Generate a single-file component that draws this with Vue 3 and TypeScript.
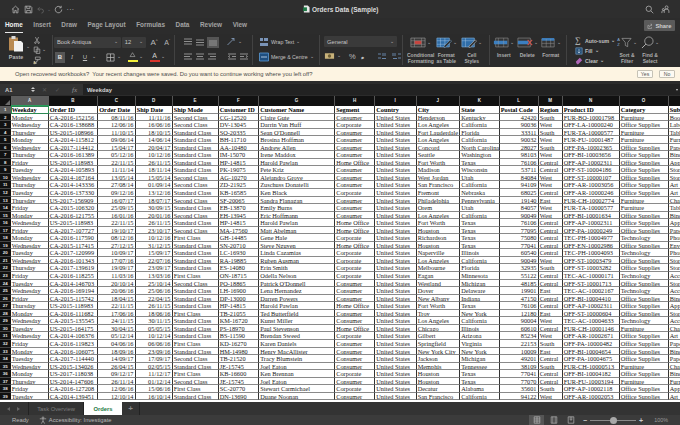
<script setup lang="ts">
const raw = `Monday|CA-2016-152156|08/11/16|11/11/16|Second Class|CG-12520|Claire Gute|Consumer|United States|Henderson|Kentucky|42420|South|FUR-BO-10001798|Furniture|Bookcases
Wednesday|CA-2016-138688|12/06/16|16/06/16|Second Class|DV-13045|Darrin Van Huff|Corporate|United States|Los Angeles|California|90036|West|OFF-LA-10000240|Office Supplies|Labels
Thursday|US-2015-108966|11/10/15|18/10/15|Standard Class|SO-20335|Sean O'Donnell|Consumer|United States|Fort Lauderdale|Florida|33311|South|FUR-TA-10000577|Furniture|Tables
Monday|CA-2014-115812|09/06/14|14/06/14|Standard Class|BH-11710|Brosina Hoffman|Consumer|United States|Los Angeles|California|90032|West|FUR-FU-10001487|Furniture|Furnishings
Wednesday|CA-2017-114412|15/04/17|20/04/17|Standard Class|AA-10480|Andrew Allen|Consumer|United States|Concord|North Carolina|28027|South|OFF-PA-10002365|Office Supplies|Paper
Thursday|CA-2016-161389|05/12/16|10/12/16|Standard Class|IM-15070|Irene Maddox|Consumer|United States|Seattle|Washington|98103|West|OFF-BI-10003656|Office Supplies|Binders
Friday|US-2015-118983|22/11/15|26/11/15|Standard Class|HP-14815|Harold Pawlan|Home Office|United States|Fort Worth|Texas|76106|Central|OFF-AP-10002311|Office Supplies|Appliances
Tuesday|CA-2014-105893|11/11/14|18/11/14|Standard Class|PK-19075|Pete Kriz|Consumer|United States|Madison|Wisconsin|53711|Central|OFF-ST-10004186|Office Supplies|Storage
Wednesday|CA-2014-167164|13/05/14|15/05/14|Second Class|AG-10270|Alejandro Grove|Consumer|United States|West Jordan|Utah|84084|West|OFF-ST-10000107|Office Supplies|Storage
Thursday|CA-2014-143336|27/08/14|01/09/14|Second Class|ZD-21925|Zuschuss Donatelli|Consumer|United States|San Francisco|California|94109|West|OFF-AR-10003056|Office Supplies|Art
Tuesday|CA-2016-137330|09/12/16|13/12/16|Standard Class|KB-16585|Ken Black|Corporate|United States|Fremont|Nebraska|68025|Central|OFF-AR-10000246|Office Supplies|Art
Thursday|US-2017-156909|16/07/17|18/07/17|Second Class|SF-20065|Sandra Flanagan|Consumer|United States|Philadelphia|Pennsylvania|19140|East|FUR-CH-10002774|Furniture|Chairs
Friday|CA-2015-106320|25/09/15|30/09/15|Standard Class|EB-13870|Emily Burns|Consumer|United States|Orem|Utah|84057|West|FUR-TA-10000577|Furniture|Tables
Monday|CA-2016-121755|16/01/16|20/01/16|Second Class|EH-13945|Eric Hoffmann|Consumer|United States|Los Angeles|California|90049|West|OFF-BI-10001634|Office Supplies|Binders
Wednesday|US-2015-118983|22/11/15|26/11/15|Standard Class|HP-14815|Harold Pawlan|Home Office|United States|Fort Worth|Texas|76106|Central|OFF-AP-10002311|Office Supplies|Appliances
Friday|CA-2017-107727|19/10/17|23/10/17|Second Class|MA-17560|Matt Abelman|Home Office|United States|Houston|Texas|77095|Central|OFF-PA-10000249|Office Supplies|Paper
Monday|CA-2016-117590|08/12/16|10/12/16|First Class|GH-14485|Gene Hale|Corporate|United States|Richardson|Texas|75080|Central|TEC-PH-10004977|Technology|Phones
Wednesday|CA-2015-117415|27/12/15|31/12/15|Standard Class|SN-20710|Steve Nguyen|Home Office|United States|Houston|Texas|77041|Central|OFF-EN-10002986|Office Supplies|Envelopes
Tuesday|CA-2017-120999|10/09/17|15/09/17|Standard Class|LC-16930|Linda Cazamias|Corporate|United States|Naperville|Illinois|60540|Central|TEC-PH-10004093|Technology|Phones
Wednesday|CA-2016-101343|17/07/16|22/07/16|Standard Class|RA-19885|Ruben Ausman|Corporate|United States|Los Angeles|California|90049|West|OFF-ST-10003479|Office Supplies|Storage
Thursday|CA-2017-139619|19/09/17|23/09/17|Standard Class|ES-14080|Erin Smith|Corporate|United States|Melbourne|Florida|32935|South|OFF-ST-10003282|Office Supplies|Storage
Friday|CA-2016-118255|11/03/16|13/03/16|First Class|ON-18715|Odella Nelson|Corporate|United States|Eagan|Minnesota|55122|Central|TEC-AC-10000171|Technology|Accessories
Tuesday|CA-2014-146703|20/10/14|25/10/14|Second Class|PO-18865|Patrick O'Donnell|Consumer|United States|Westland|Michigan|48185|Central|OFF-ST-10001713|Office Supplies|Storage
Wednesday|CA-2016-169194|20/06/16|25/06/16|Standard Class|LH-16900|Lena Hernandez|Consumer|United States|Dover|Delaware|19901|East|TEC-AC-10002167|Technology|Accessories
Friday|CA-2015-115742|18/04/15|22/04/15|Standard Class|DP-13000|Darren Powers|Consumer|United States|New Albany|Indiana|47150|Central|OFF-BI-10004410|Office Supplies|Binders
Thursday|US-2015-118983|22/11/15|26/11/15|Standard Class|HP-14815|Harold Pawlan|Home Office|United States|Fort Worth|Texas|76106|Central|OFF-AP-10002311|Office Supplies|Appliances
Monday|CA-2016-111682|17/06/16|18/06/16|First Class|TB-21055|Ted Butterfield|Consumer|United States|Troy|New York|12180|East|OFF-ST-10000604|Office Supplies|Storage
Wednesday|CA-2015-135545|24/11/15|30/11/15|Standard Class|KM-16720|Kunst Miller|Consumer|United States|Los Angeles|California|90004|West|TEC-AC-10004633|Technology|Accessories
Tuesday|US-2015-164175|30/04/15|05/05/15|Standard Class|PS-18970|Paul Stevenson|Home Office|United States|Chicago|Illinois|60610|Central|FUR-CH-10001146|Furniture|Chairs
Wednesday|CA-2014-106376|05/12/14|10/12/14|Standard Class|BS-11590|Brendan Sweed|Corporate|United States|Gilbert|Arizona|85234|West|OFF-AR-10002671|Office Supplies|Art
Friday|CA-2016-119823|04/06/16|06/06/16|First Class|KD-16270|Karen Daniels|Consumer|United States|Springfield|Virginia|22153|South|OFF-PA-10000482|Office Supplies|Paper
Monday|CA-2016-106075|18/09/16|23/09/16|Standard Class|HM-14980|Henry MacAllister|Consumer|United States|New York City|New York|10009|East|OFF-BI-10004654|Office Supplies|Binders
Tuesday|CA-2017-114440|14/09/17|17/09/17|Second Class|TB-21520|Tracy Blumstein|Consumer|United States|Jackson|Michigan|49201|Central|OFF-PA-10004675|Office Supplies|Paper
Wednesday|US-2015-134026|26/04/15|02/05/15|Standard Class|JE-15745|Joel Eaton|Consumer|United States|Memphis|Tennessee|38109|South|FUR-CH-10000513|Furniture|Chairs
Monday|US-2017-118038|09/12/17|11/12/17|First Class|KB-16600|Ken Brennan|Corporate|United States|Houston|Texas|77041|Central|OFF-BI-10004182|Office Supplies|Binders
Thursday|US-2014-147606|26/11/14|01/12/14|Second Class|JE-15745|Joel Eaton|Consumer|United States|Houston|Texas|77070|Central|FUR-FU-10003194|Furniture|Furnishings
Friday|CA-2016-127208|12/06/16|15/06/16|First Class|SC-20770|Stewart Carmichael|Corporate|United States|Decatur|Alabama|35601|South|OFF-AP-10002118|Office Supplies|Appliances
Tuesday|CA-2014-139451|12/10/14|16/10/14|Standard Class|DN-13690|Duane Noonan|Consumer|United States|San Francisco|California|94122|West|OFF-AR-10002053|Office Supplies|Art`
const columns = 'ABCDEFGHIJKLMNOP'.split('')
const headers = ['Weekday', 'Order ID', 'Order Date', 'Ship Date', 'Ship Mode', 'Customer ID', 'Customer Name', 'Segment', 'Country', 'City', 'State', 'Postal Code', 'Region', 'Product ID', 'Category', 'Sub-Category']
const rows: string[][] = raw.split('\n').map((line) => line.split('|'))
const rightAligned = new Set([2, 3, 11])
const tabs = ['Home', 'Insert', 'Draw', 'Page Layout', 'Formulas', 'Data', 'Review', 'View']
</script>

<template>
  <div class="app">
    <header class="titlebar">
      <div class="quick">
        <svg class="qi" viewBox="0 0 10 10"><path d="M1 5 5 1.3 9 5M2.3 4v4.7h1.9V6h1.6v2.7h1.9V4" /></svg>
        <svg class="qi" viewBox="0 0 10 10"><path d="M1.3 1.3h6l1.4 1.4v6H1.3zM3 1.3v2.4h3.6V1.3M3 8.7V6h4v2.7" /></svg>
        <svg class="qi dim" viewBox="0 0 10 10"><path d="M2 4.5 4 2.5M2 4.5l2 2M2 4.5h4a2 2 0 0 1 0 4.5" /></svg>
        <span class="dim-caret">⌄</span>
        <svg class="qi" viewBox="0 0 10 10"><path d="M7.6 2.6A3.6 3.6 0 1 0 8.6 5M8 .9v2.2H5.8" /></svg>
        <span class="more">···</span>
      </div>
      <div class="doc">
        <svg class="doc-icon" viewBox="0 0 8 9"><path d="M1 .5h4.4L7.5 2.6v6H1z" fill="#e8e8e8" /><path d="M.2 2.6h4.3v4.3H.2z" fill="#1d7a45" /></svg>
        <span>Orders Data (Sample)</span>
      </div>
      <div class="title-right">
        <svg class="qi" viewBox="0 0 10 10"><circle cx="4.2" cy="4.2" r="3" /><path d="m6.5 6.5 2.7 2.7" /></svg>
        <svg class="qi" viewBox="0 0 10 10"><circle cx="6.2" cy="2.6" r="1.6" /><path d="M3.6 8.8V6.6a2.6 2 0 0 1 5.2 0v2.2" /><circle cx="2.6" cy="5" r="1.1" /><path d="M1 9V7.4a1.6 1.4 0 0 1 2-1" /></svg>
      </div>
    </header>

    <nav class="tabs">
      <span v-for="(t, i) in tabs" :key="t" class="tab" :class="{ active: i === 0 }">{{ t }}</span>
      <span class="share">
        <svg class="share-icon" viewBox="0 0 10 10"><path d="M3.5 4H1.5v5h6V7M4 7c0-2.5 1.5-4 4-4M6.3 1 8.4 3 6.3 5" /></svg>
        Share
      </span>
    </nav>

    <section class="ribbon">
      <div class="group clip">
        <div class="paste">
          <svg class="paste-icon" viewBox="0 0 17 17">
            <path d="M1 2.5h9v13H1z" fill="#b98a52" />
            <path d="M3.5 1h4v3h-4z" fill="#d9d9d9" />
            <path d="M6 6h7l2 2v8.5H6z" fill="#f2f2f2" />
          </svg>
          <span class="paste-label">Paste</span>
        </div>
        <span class="caret paste-caret">⌄</span>
        <div class="clip-tools">
          <svg class="qi" viewBox="0 0 10 10"><path d="M3 1l3 6M7 1 4 7" /><circle cx="3" cy="8" r="1" /><circle cx="7" cy="8" r="1" /></svg>
          <span class="copy"><svg class="qi" viewBox="0 0 10 10"><path d="M1.5 1h4.5v6H1.5zM4 3.5h4.5V9H4z" /></svg><span class="caret">⌄</span></span>
          <svg class="qi brush" viewBox="0 0 10 10"><path d="M3 1h6v3H3zM6 4v2H4v3" /><path d="M1.5 6 4 9 1 9.5z" fill="#e2c25c" /></svg>
        </div>
      </div>

      <div class="group font">
        <div class="row">
          <span class="select font-name"><span>Book Antiqua</span><span class="caret">⌄</span></span>
          <span class="select font-size"><span>12</span><span class="caret">⌄</span></span>
          <span class="glyph grow">A<sup>^</sup></span>
          <span class="glyph shrink">A<sup>ˇ</sup></span>
        </div>
        <div class="row lower">
          <span class="btn on bold">B</span>
          <span class="btn ital">I</span>
          <span class="btn under">U</span>
          <span class="caret">⌄</span>
          <svg class="qi border-icon" viewBox="0 0 10 10"><path d="M1 1h8v8H1zM5 1v8M1 5h8" /></svg>
          <span class="caret">⌄</span>
          <span class="color-btn fill-icon"><svg class="qi" viewBox="0 0 10 10"><path d="M5 1 1.5 6.5h7z" /></svg><i class="swatch yellow"></i></span>
          <span class="caret">⌄</span>
          <span class="color-btn"><span class="color-a">A</span><i class="swatch red"></i></span>
          <span class="caret">⌄</span>
        </div>
      </div>

      <div class="group align">
        <div class="row">
          <svg class="line" viewBox="0 0 10 10"><path d="M1 2h8M1 4.5h8M1 7h8" /></svg>
          <svg class="line" viewBox="0 0 10 10"><path d="M1 3h8M1 5.5h8M1 8h8" /></svg>
          <span class="line-on"><svg class="line" viewBox="0 0 10 10"><path d="M1 4h8M1 6h8M1 8h8" /></svg></span>
          <svg class="line orient" viewBox="0 0 10 10"><path d="M1.5 8 8 1.5M5.5 1.5H8V4" /></svg>
          <span class="caret">⌄</span>
        </div>
        <div class="row lower">
          <svg class="line" viewBox="0 0 10 10"><path d="M1 2h8M1 4.5h6M1 7h8" /></svg>
          <svg class="line" viewBox="0 0 10 10"><path d="M1 2h8M2 4.5h6M1 7h8" /></svg>
          <svg class="line" viewBox="0 0 10 10"><path d="M1 2h8M3 4.5h6M1 7h8" /></svg>
          <svg class="line indent" viewBox="0 0 10 10"><path d="M1 2h8M5 4.5h4M1 7h8M3 3.5 1.5 4.5 3 5.5" /></svg>
          <svg class="line" viewBox="0 0 10 10"><path d="M1 2h8M1 4.5h4M1 7h8M7 3.5l1.5 1-1.5 1" /></svg>
        </div>
      </div>

      <div class="group wrap">
        <div class="row small-row"><svg class="wi" viewBox="0 0 10 10"><path d="M1 1h3v3H1zM5 1h4v3H5zM1 6h8v3H1z" fill="#7a94b8" /></svg><span>Wrap Text</span><span class="caret">⌄</span></div>
        <div class="row small-row lower"><svg class="wi" viewBox="0 0 10 10"><path d="M.5 1h9v8h-9z" fill="#1f4f80" stroke="#5b9bd5" stroke-width=".8" /><path d="M2 5h6" stroke="#cfe2f5" stroke-width=".8" /></svg><span>Merge &amp; Centre</span><span class="caret">⌄</span></div>
      </div>

      <div class="group number">
        <span class="select general"><span>General</span><span class="caret">⌄</span></span>
        <div class="row lower numrow">
          <svg class="wi money" viewBox="0 0 12 10"><path d="M1 2h10v6H1z" fill="#c8b27a" /><circle cx="6" cy="5" r="1.8" fill="#6d5d33" /></svg>
          <span class="caret">⌄</span>
          <span class="sym pct">%</span>
          <span class="sym comma">❟</span>
          <span class="vsep"></span>
          <svg class="wi dec" viewBox="0 0 10 10"><path d="M1 3h3M1 7h3M6 2v3M8 2v3M5 7.5h4" stroke="#6e8fb5" fill="none" stroke-width=".9" /></svg>
          <svg class="wi dec" viewBox="0 0 10 10"><path d="M6 3h3M6 7h3M1 2v3M3 2v3M1 7.5h4" stroke="#6e8fb5" fill="none" stroke-width=".9" /></svg>
        </div>
      </div>

      <div class="group styles">
        <div class="big">
          <span class="big-top"><svg class="bi" viewBox="0 0 18 12"><path d="M1 1h16v10H1z" fill="#3a3a3a" stroke="#9a9a9a" stroke-width=".7" /><path d="M5 4h8v4H5z" fill="#c8423c" /><path d="M5 1v10M13 1v10M1 4h16M1 8h16" stroke="#9a9a9a" stroke-width=".5" /></svg><span class="caret">⌄</span></span>
          <span class="big-label">Conditional<br />Formatting</span>
        </div>
        <div class="big">
          <span class="big-top"><svg class="bi" viewBox="0 0 18 12"><path d="M1 1h14v10H1z" fill="#2f6da8" stroke="#7fb0dc" stroke-width=".7" /><path d="M5 1v10M10 1v10M1 4h14M1 8h14" stroke="#a9c8e4" stroke-width=".5" /><path d="m9 10 7-7 1.5 1.5-7 7H9z" fill="#2b2b2b" stroke="#7fb0dc" stroke-width=".6" /></svg><span class="caret">⌄</span></span>
          <span class="big-label">Format<br />as Table</span>
        </div>
        <div class="big">
          <span class="big-top"><svg class="bi" viewBox="0 0 18 12"><path d="M1 1h14v10H1z" fill="#2f6da8" stroke="#7fb0dc" stroke-width=".7" /><path d="M5 1v10M1 4h14" stroke="#a9c8e4" stroke-width=".5" /><path d="m9 10 7-7 1.5 1.5-7 7H9z" fill="#2b2b2b" stroke="#c8c8c8" stroke-width=".6" /></svg><span class="caret">⌄</span></span>
          <span class="big-label">Cell<br />Styles</span>
        </div>
      </div>

      <div class="group cells">
        <div class="big cell-btn">
          <span class="big-top"><svg class="bi" viewBox="0 0 18 12"><path d="M3 1h14v10H3z" fill="#333" stroke="#9a9a9a" stroke-width=".6" /><path d="M1 4h15v4H1z" fill="#3c7fc0" /><path d="M6 1v10M12 1v10" stroke="#9a9a9a" stroke-width=".5" /></svg><span class="caret">⌄</span></span>
          <span class="big-label">Insert</span>
        </div>
        <div class="big cell-btn">
          <span class="big-top"><svg class="bi" viewBox="0 0 18 12"><path d="M1 1h14v10H1z" fill="#333" stroke="#9a9a9a" stroke-width=".6" /><path d="M1 4h12v4H1z" fill="#3c7fc0" /><path d="m12 3 5 6M17 3l-5 6" stroke="#d0554d" stroke-width="1.2" /></svg><span class="caret">⌄</span></span>
          <span class="big-label">Delete</span>
        </div>
        <div class="big cell-btn">
          <span class="big-top"><svg class="bi" viewBox="0 0 18 12"><path d="M2 2h14v9H2z" fill="#333" stroke="#9a9a9a" stroke-width=".6" /><path d="M2 1h14v3H2z" fill="#3c7fc0" /><path d="M7 2v9M12 2v9M2 7h14" stroke="#9a9a9a" stroke-width=".5" /></svg><span class="caret">⌄</span></span>
          <span class="big-label">Format</span>
        </div>
      </div>

      <div class="group edit">
        <div class="edit-list">
          <div class="edit-item"><span class="sigma">∑</span><span>Auto-sum</span><span class="caret">⌄</span></div>
          <div class="edit-item"><svg class="wi" viewBox="0 0 10 10"><path d="M1 1h8v8H1z" fill="#274f75" stroke="#7aa6cf" stroke-width=".7" /><path d="M5 2.5v5M3.5 6 5 7.5 6.5 6" stroke="#dce9f5" fill="none" stroke-width=".7" /></svg><span>Fill</span><span class="caret">⌄</span></div>
          <div class="edit-item"><svg class="wi" viewBox="0 0 10 10"><path d="M1 6 6 1l3 3-5 5H2.5z" fill="#b066b8" /></svg><span>Clear</span><span class="caret">⌄</span></div>
        </div>
        <div class="big sort">
          <span class="big-top"><span class="az">A<br />Z</span><svg class="bi funnel" viewBox="0 0 12 12"><path d="M1 1.5h10L7.3 6v4.500l-2.600-1.300V6z" fill="none" stroke="#a8a8a8" stroke-width=".7" /></svg><span class="caret">⌄</span></span>
          <span class="big-label">Sort &amp;<br />Filter</span>
        </div>
        <div class="big find">
          <span class="big-top"><svg class="bi lens" viewBox="0 0 14 14"><circle cx="8.5" cy="5.5" r="4.5" fill="none" stroke="#c8c8c8" stroke-width=".7" /><path d="M5.3 8.7 1 13" stroke="#c8c8c8" stroke-width=".9" /></svg><span class="caret">⌄</span></span>
          <span class="big-label">Find &amp;<br />Select</span>
        </div>
      </div>
    </section>

    <aside class="notice">
      <span class="notice-text">Open recovered workbooks?&nbsp;&nbsp;Your recent changes were saved. Do you want to continue working where you left off?</span>
      <span class="notice-actions">
        <button class="nb">Yes</button>
        <button class="nb">No</button>
      </span>
    </aside>

    <div class="formula">
      <span class="namebox">A1</span>
      <span class="stepper"><i class="up"></i><i class="down"></i></span>
      <span class="fx-btn muted">✕</span>
      <span class="fx-btn muted">✓</span>
      <span class="fx-btn fx">fx</span>
      <span class="input">Weekday<i class="down-arrow"></i></span>
    </div>

    <main class="sheet">
      <div class="corner"><i class="corner-tri"></i></div>
      <div v-for="(c, i) in columns" :key="c" class="colhead" :class="{ sel: i === 0 }">{{ c }}</div>

      <div class="rownum sel">1</div>
      <div v-for="(h, i) in headers" :key="h" class="cell head" :class="{ current: i === 0 }">{{ h }}</div>

      <template v-for="(r, ri) in rows" :key="ri">
        <div class="rownum">{{ ri + 2 }}</div>
        <div v-for="(v, ci) in r" :key="ci" class="cell" :class="{ right: rightAligned.has(ci) }">{{ v }}</div>
      </template>
    </main>

    <div class="sheetbar">
      <span class="arrows"><i class="al"></i><i class="ar"></i></span>
      <span class="sheet-tab">Task Overview</span>
      <span class="sheet-tab active">Orders</span>
      <span class="add">+</span>
    </div>

    <footer class="status">
      <span class="ready">Ready</span>
      <span class="access">
        <svg class="qi" viewBox="0 0 10 10"><circle cx="5" cy="2" r="1" /><path d="M1 3.5h8M5 3.5V6M3 9.5 5 6l2 3.5" /></svg>
        Accessibility: Investigate
      </span>
      <span class="status-right">
        <span class="view on"><svg class="qi" viewBox="0 0 10 10"><path d="M1.5 1h7v8h-7zM1.5 3.7h7M1.5 6.3h7M5 1v8" /></svg></span>
        <span class="view"><svg class="qi" viewBox="0 0 10 10"><path d="M1.5 1h7v8h-7zM3.5 1v8M6.5 1v8" /></svg></span>
        <span class="view"><svg class="qi" viewBox="0 0 10 10"><path d="M1.5 1h7v8h-7zM4 1v4h2V1" /></svg></span>
        <span class="zoom-sym">−</span>
        <span class="slider"><i class="knob"></i></span>
        <span class="zoom-sym">+</span>
        <span class="pct100">100%</span>
      </span>
    </footer>
  </div>
</template>

<style scoped>
.app {
  width: 680px;
  height: 425px;
  overflow: hidden;
  display: flex;
  flex-direction: column;
  background: #2b2b2b;
  color: #d0d0d0;
  font-family: "Liberation Sans", Arial, sans-serif;
  font-size: 5.6px;
}
svg { display: block; flex: none; }
.qi { width: 8px; height: 8px; fill: none; stroke: #bdbdbd; stroke-width: .8; }
.qi.dim { stroke: #6b6b6b; }
.caret { font-size: 5px; line-height: 5px; color: #b5b5b5; height: 6px; flex: none; }

.titlebar { height: 18px; flex: none; display: flex; align-items: center; position: relative; background: #2e2e2e; padding: 0 10px 0 11px; }
.quick { display: flex; align-items: center; gap: 3.5px; }
.quick .qi { width: 9px; height: 9px; }
.dim-caret { color: #666; font-size: 5px; margin-left: -2px; }
.more { color: #bbb; font-size: 7px; letter-spacing: .3px; }
.doc { position: absolute; left: 303px; display: flex; align-items: center; gap: 2px; font-size: 6.5px; font-weight: bold; color: #dcdcdc; }
.doc-icon { width: 7px; height: 8px; }
.title-right { margin-left: auto; display: flex; gap: 7px; }
.title-right .qi { width: 9px; height: 9px; }

.tabs { height: 16px; flex: none; display: flex; align-items: flex-start; background: #2c2c2c; padding: 0 5px; position: relative; }
.tab { font-size: 6.4px; color: #c0c0c0; margin-right: 10.6px; line-height: 13px; height: 13.5px; font-weight: bold; opacity: .8; }
.tab.active { color: #f0f0f0; border-bottom: 1px solid #e8e8e8; opacity: 1; }
.share { position: absolute; left: 644px; top: 2px; width: 31px; height: 11px; background: #5a5a5a; border-radius: 1px; display: flex; align-items: center; justify-content: center; gap: 2px; color: #cfcfcf; font-size: 5.8px; font-weight: bold; }
.share-icon { width: 6px; height: 6px; fill: none; stroke: #cfcfcf; stroke-width: .8; }

.ribbon { height: 33px; flex: none; display: flex; background: #2b2b2b; }
.group { flex: none; height: 30px; margin-top: 1px; border-right: 1px solid #424242; position: relative; }
.row { display: flex; align-items: center; height: 12px; margin-top: 1px; }
.row.lower { margin-top: 3px; }

.clip { width: 53px; display: flex; padding-left: 7px; box-sizing: border-box; }
.paste { width: 18px; display: flex; flex-direction: column; align-items: center; }
.paste-icon { width: 17px; height: 17px; }
.paste-label { font-size: 5.4px; margin-top: 2px; font-weight: bold; color: #bcbcbc; }
.paste-caret { margin: 9px 0 0 1px; }
.clip-tools { display: flex; flex-direction: column; gap: 1.5px; margin-left: 2.5px; padding-top: 1px; }
.clip-tools .qi { width: 8px; height: 8.5px; }
.copy { display: flex; align-items: center; gap: 1px; }

.font { width: 122px; padding-left: 1px; box-sizing: border-box; }
.select { background: #3a3a3a; height: 11px; border-radius: 1px; display: flex; align-items: center; justify-content: space-between; padding: 0 3px; box-sizing: border-box; color: #c6c6c6; font-size: 5.8px; }
.font-name { width: 68px; }
.font-size { width: 25px; margin-left: 1px; }
.glyph { font-size: 8px; margin-left: 4px; color: #b8b8b8; width: 10px; }
.glyph sup { font-size: 4px; vertical-align: 3px; line-height: 0; }
.shrink { font-size: 7px; }
.btn { width: 10px; height: 11px; display: flex; align-items: center; justify-content: center; font-size: 6px; color: #bdbdbd; }
.btn.on { background: #565656; color: #e2e2e2; margin-left: 1px; }
.bold { font-weight: bold; }
.ital { font-style: italic; font-family: "Liberation Serif", serif; margin-left: 2px; }
.under { text-decoration: underline; margin-left: 3px; margin-right: 2px; }
.border-icon { margin-left: 10px; width: 9px; height: 9px; margin-right: 2px; }
.color-btn { position: relative; width: 11px; height: 11px; display: flex; flex-direction: column; align-items: center; margin-left: 6px; margin-right: 1px; }
.color-btn .qi { width: 7px; height: 7px; }
.color-a { font-size: 7px; line-height: 7px; color: #cfcfcf; }
.swatch { display: block; width: 10px; height: 2px; margin-top: 1px; }
.yellow { background: #f2ee3a; }
.red { background: #d8342c; }

.align { width: 78px; padding-left: 8px; box-sizing: border-box; }
.line { width: 10px; height: 10px; fill: none; stroke: #a9a9a9; stroke-width: .8; margin-right: 2px; }
.line-on { width: 12px; height: 11px; background: #555; display: flex; align-items: center; justify-content: center; margin-right: 0; }
.line-on .line { margin: 0; }
.orient { margin-left: 7px; stroke: #8aa4c4; }
.indent { margin-left: 8px; }

.wrap { width: 67px; padding-left: 6px; box-sizing: border-box; }
.small-row { gap: 2px; font-size: 5.2px; color: #c4c4c4; }
.wi { width: 10px; height: 10px; }

.number { width: 83px; padding-left: 4px; box-sizing: border-box; }
.general { width: 73px; margin-top: 1px; }
.numrow { gap: 2px; height: 12px; }
.money { width: 11px; }
.sym { font-size: 7.5px; color: #bbb; }
.pct { margin-left: 6px; margin-right: 3px; }
.comma { margin-right: 6px; font-weight: bold; }
.vsep { width: 1px; height: 9px; background: #4a4a4a; margin-right: 3px; }
.dec { margin-right: 3px; }

.styles { width: 87px; display: flex; padding-left: 5px; box-sizing: border-box; }
.styles .big { width: 25.5px; }
.cells { width: 77px; display: flex; padding-left: 2px; box-sizing: border-box; }
.big { display: flex; flex-direction: column; align-items: center; width: 27px; flex: none; }
.big-top { display: flex; align-items: center; gap: 1px; height: 15px; }
.bi { width: 16px; height: 11px; }
.big-label { font-size: 5px; line-height: 6px; text-align: center; white-space: nowrap; color: #bdbdbd; margin-top: 2px; font-weight: bold; opacity: .9; }
.cell-btn { width: 23.5px; }

.edit { width: 113px; display: flex; border-right: none; padding-left: 8px; box-sizing: border-box; }
.edit-list { display: flex; flex-direction: column; gap: 1px; width: 40px; flex: none; padding-top: 1px; }
.edit-item { display: flex; align-items: center; gap: 2px; height: 9px; font-size: 5.2px; color: #c2c2c2; font-weight: bold; white-space: nowrap; }
.edit-item .wi { width: 8px; height: 8px; }
.sigma { font-size: 8px; line-height: 8px; width: 8px; flex: none; color: #aaa; font-family: "Liberation Serif", serif; }
.sort { width: 24px; }
.find { width: 28px; margin-left: -3px; }
.az { font-size: 4px; line-height: 4.5px; color: #8ab0d8; text-align: center; }
.funnel { width: 11px; height: 11px; }
.lens { width: 13px; height: 13px; }

.notice { height: 14px; flex: none; display: flex; align-items: center; background: #fdf4e2; color: #4b4b4b; padding: 0 5px 0 15px; }
.notice-text { font-size: 5.8px; white-space: nowrap; }
.notice-actions { margin-left: auto; display: flex; gap: 6px; }
.nb { width: 16px; height: 8px; padding: 0; border: 1px solid #c6c2b6; background: #fdfaf2; border-radius: 1px; font: 5.2px "Liberation Sans", sans-serif; color: #555; line-height: 6px; }

.formula { height: 11px; flex: none; margin: 3px 0 1px; display: flex; align-items: center; background: #333; color: #c8c8c8; }
.namebox { width: 31px; padding-left: 5px; box-sizing: border-box; font-size: 5.8px; font-weight: bold; }
.stepper { width: 5px; display: flex; flex-direction: column; gap: 1px; }
.up { width: 0; height: 0; border: 2px solid transparent; border-top: 0; border-bottom: 2px solid #ccc; }
.down { width: 0; height: 0; border: 2px solid transparent; border-bottom: 0; border-top: 2px solid #ccc; }
.fx-btn { width: 13px; text-align: center; font-size: 6px; }
.muted { color: #5a5a5a; margin-left: 2px; margin-right: -2px; }
.fx { font-family: "Liberation Serif", serif; font-style: italic; color: #999; font-size: 7px; margin-left: 6px; margin-right: 2px; }
.input { flex: 1; height: 11px; background: #222; display: flex; align-items: center; justify-content: space-between; padding: 0 2px 0 4px; font-size: 5.8px; font-weight: bold; color: #d2d2d2; }
.down-arrow { width: 0; height: 0; border: 1.5px solid transparent; border-bottom: 0; border-top: 2px solid #ccc; }

.sheet {
  height: 306px;
  flex: none;
  display: grid;
  grid-template-columns: 10.5px 38px 49.5px 37.5px 37px 46px 40.5px 76px 40px 41.5px 43.5px 39.5px 39px 24px 57px 49px 60px;
  grid-template-rows: 10px;
  grid-auto-rows: 7.55px;
  background: #fff;
  overflow: hidden;
  font-family: "Liberation Serif", "Times New Roman", serif;
}
.corner { background: #141414; position: relative; }
.corner-tri { position: absolute; right: 1px; bottom: 1px; width: 0; height: 0; border-style: solid; border-width: 0 0 5px 5px; border-color: transparent transparent #6a6a6a transparent; }
.colhead { background: #111; border-right: 1px solid #555; color: #e6e6e6; font: bold 4.5px/9px "Liberation Sans", sans-serif; text-align: center; min-width: 0; }
.colhead.sel { background: #5d5d5d; border-bottom: 1px solid #2a9d5c; border-right: none; }
.rownum { background: #111; color: #e8e8e8; font: bold 4.4px/7.5px "Liberation Sans", sans-serif; text-align: center; border-bottom: .5px solid #444; overflow: hidden; }
.rownum.sel { background: #5d5d5d; }
.cell {
  font-size: 6.3px;
  line-height: 7px;
  color: #1a1a1a;
  padding: 0 0 0 1.2px;
  white-space: nowrap;
  overflow: hidden;
  border-right: 1px solid #333;
  border-bottom: 1px solid #8a8a8a;
  min-width: 0;
  box-sizing: border-box;
}
.cell.right { text-align: right; padding: 0 1px 0 0; }
.cell.head { font-weight: bold; color: #000; }
.cell.current { outline: 1px solid #2b8a52; outline-offset: -1px; }

.sheetbar { height: 13px; flex: none; display: flex; align-items: stretch; background: #333; }
.arrows { width: 29px; display: flex; align-items: center; gap: 7px; padding-left: 7px; box-sizing: border-box; border-right: 1px solid #222; }
.al { width: 0; height: 0; border: 2px solid transparent; border-left: 0; border-right: 3px solid #666; }
.ar { width: 0; height: 0; border: 2px solid transparent; border-right: 0; border-left: 3px solid #666; }
.sheet-tab { width: 54px; display: flex; align-items: center; justify-content: center; font-size: 5.8px; color: #7c7c7c; border-right: 1px solid #222; }
.sheet-tab.active { width: 38px; background: #fff; color: #1d7a45; font-weight: bold; border-right: none; }
.add { width: 17px; display: flex; align-items: center; justify-content: center; color: #888; font-size: 8px; font-weight: bold; border-right: 1px solid #222; }

.status { height: 10px; flex: none; display: flex; align-items: center; background: #3b3b3b; color: #b8b8b8; font-size: 5.8px; padding: 0 12px; }
.ready { margin-right: 10px; }
.access { display: flex; align-items: center; gap: 2px; }
.status-right { margin-left: auto; display: flex; align-items: center; }
.view { width: 15px; height: 10px; display: flex; align-items: center; justify-content: center; margin-right: 2px; }
.view.on { background: #555; }
.zoom-sym { font-size: 7px; color: #ccc; font-weight: bold; margin: 0 3px; }
.slider { width: 46px; height: 1px; background: #8a8a8a; position: relative; }
.knob { position: absolute; left: 20px; top: -3px; width: 7px; height: 7px; border-radius: 50%; background: #a8a8a8; }
.pct100 { margin-left: 8px; font-size: 5.4px; color: #9a9a9a; }
</style>
